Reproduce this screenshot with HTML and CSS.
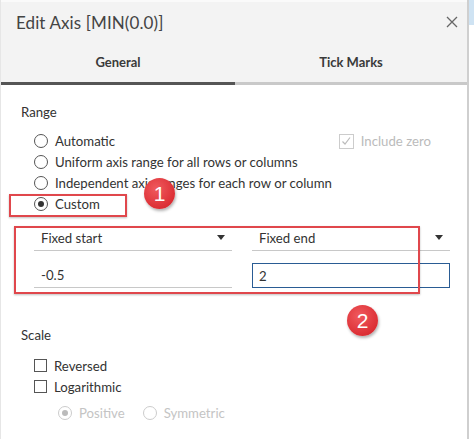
FILE: index.html
```html
<!DOCTYPE html>
<html>
<head>
<meta charset="utf-8">
<link rel="stylesheet" href="styles.css">
</head>
<body>
<div class="page">
  <div class="dialog">
    <div class="header">
      <div class="titlebar">
        <span class="title">Edit Axis [MIN(0.0)]</span>
        <svg class="close" width="12" height="12" viewBox="0 0 12 12"><path d="M1 1L11 11M11 1L1 11" stroke="#666" stroke-width="1.3" fill="none"/></svg>
      </div>
      <div class="tabs">
        <div class="tab active">General</div>
        <div class="tab">Tick Marks</div>
      </div>
    </div>
    <div class="body">
      <div class="section-label">Range</div>
      <div class="range">
        <div class="options">
          <label class="opt"><span class="radio"></span>Automatic</label>
          <label class="opt"><span class="radio"></span>Uniform axis range for all rows or columns</label>
          <label class="opt"><span class="radio"></span>Independent axis ranges for each row or column</label>
          <label class="opt"><span class="radio on"></span>Custom</label>
        </div>
        <label class="include"><span class="check checked"><svg width="12" height="12" viewBox="0 0 12 12"><path d="M2.5 6.5L5 9L10 2.5" stroke="#bbb" stroke-width="1.2" fill="none"/></svg></span>Include zero</label>
      </div>
      <div class="fields">
        <div class="col">
          <div class="select"><span>Fixed start</span><span class="caret"></span></div>
          <div class="input">-0.5</div>
        </div>
        <div class="col">
          <div class="select"><span>Fixed end</span><span class="caret"></span></div>
          <div class="input focused">2</div>
        </div>
      </div>
      <div class="section-label scale">Scale</div>
      <div class="checks">
        <label class="opt"><span class="check"></span>Reversed</label>
        <label class="opt"><span class="check"></span>Logarithmic</label>
      </div>
      <div class="sub">
        <label class="opt dis"><span class="radio on"></span>Positive</label>
        <label class="opt dis"><span class="radio"></span>Symmetric</label>
      </div>
    </div>
  </div>
  <div class="side"></div>

  <div class="ann box1"></div>
  <div class="ann box2"></div>
  <div class="badge b1">1</div>
  <div class="badge b2">2</div>
</div>
</body>
</html>
```
FILE: styles.css
```css
* { box-sizing: border-box; }
html, body { margin: 0; padding: 0; }
body {
  width: 474px; height: 439px; overflow: hidden; background: #fff;
  font-family: Lato, "Liberation Sans", sans-serif; color: #333;
}
.page { position: relative; display: flex; width: 474px; height: 439px; }
.dialog {
  width: 469px; height: 439px;
  border-right: 2px solid #cfcfcf;
  border-left: 1px solid #e6e6e6;
  background: #fff;
}
.side {
  flex: 1;
  background: linear-gradient(#cfe3f3 0, #cfe3f3 25px, #fff 25px);
}
.header {
  background: #f3f3f3;
  border-top: 2px solid #fafafa;
}
.titlebar {
  display: flex; align-items: center; justify-content: space-between;
  padding: 0 9px 0 15px; height: 40px;
}
.title { font-size: 17px; color: #444; letter-spacing: 0.1px; }
.tabs { display: flex; height: 43px; }
.tab {
  flex: 0 0 234px; text-align: center; font-size: 13px; font-weight: 700;
  color: #3a3a3a; padding-top: 12px;
  border-bottom: 3px solid #c9c9c9;
}
.tab.active { border-bottom-color: #555; }
.tab + .tab { flex: 1; }
.body { padding: 18px 0 0 20px; }
.section-label { font-size: 13.2px; color: #333; height: 18px; line-height: 18px; }
.range { display: flex; justify-content: space-between; padding: 10px 0 0 13px; }
.options { display: flex; flex-direction: column; }
.opt {
  display: flex; align-items: center; font-size: 13.2px; height: 20.8px; color: #333;
  white-space: nowrap;
}
.radio {
  width: 14px; height: 14px; border-radius: 50%; border: 1px solid #555;
  margin-right: 7px; display: inline-flex; align-items: center; justify-content: center;
  background: #fff; flex: none;
}
.radio.on::after {
  content: ""; width: 6px; height: 6px; border-radius: 50%; background: #333;
}
.include {
  display: flex; align-items: center; font-size: 13.2px; color: #bbb;
  height: 20px; margin-right: 36px; white-space: nowrap;
}
.check {
  width: 13px; height: 13px; border: 1px solid #555; background: #fff; flex: none;
  margin-right: 7px; display: inline-flex; align-items: center; justify-content: center;
}
.check.checked { border-color: #ccc; width: 15px; height: 15px; }
.fields {
  display: flex; gap: 20px; padding: 13px 0 0 13px; width: 448px;
}
.col { width: 198px; display: flex; flex-direction: column; gap: 12px; }
.select {
  display: flex; justify-content: space-between; align-items: center;
  height: 24px; border-bottom: 1px solid #c8c8c8; padding: 0 7px 2px 7px;
  font-size: 13.2px; color: #333;
}
.caret {
  width: 0; height: 0; border-left: 4.5px solid transparent; border-right: 4.5px solid transparent;
  border-top: 5px solid #333;
}
.input {
  height: 25px; border-bottom: 1px solid #c8c8c8; padding: 2px 7px 0;
  font-size: 13.2px; line-height: 21px;
}
.input.focused { border: 1.5px solid #2a5c94; padding-left: 6px; }
.scale { margin-top: 38px; }
.checks { padding: 11px 0 0 13px; display: flex; flex-direction: column; }
.checks .opt { height: 21px; }
.sub { display: flex; gap: 18px; padding: 5px 0 0 37px; }
.opt.dis { color: #c4c4c4; }
.opt.dis .radio { border-color: #ccc; }
.opt.dis .radio.on::after { background: #bbb; }

.ann { position: absolute; border: 2px solid #e0474c; box-shadow: 0 1px 2px rgba(0,0,0,0.25); }
.box1 { left: 9px; top: 194px; width: 118px; height: 23px; }
.box2 { left: 14px; top: 226px; width: 406px; height: 68px; }
.badge {
  position: absolute; width: 31px; height: 31px; border-radius: 50%;
  background: radial-gradient(circle at 40% 35%, #f05a5e, #dc2f35 70%, #c8262b);
  color: #fff; font-family: "Liberation Sans", Arial, sans-serif; font-size: 21px;
  display: flex; align-items: center; justify-content: center;
  box-shadow: 1px 2px 3px rgba(0,0,0,0.3);
}
.b1 { left: 144px; top: 178px; }
.b2 { left: 347px; top: 305px; }
```
